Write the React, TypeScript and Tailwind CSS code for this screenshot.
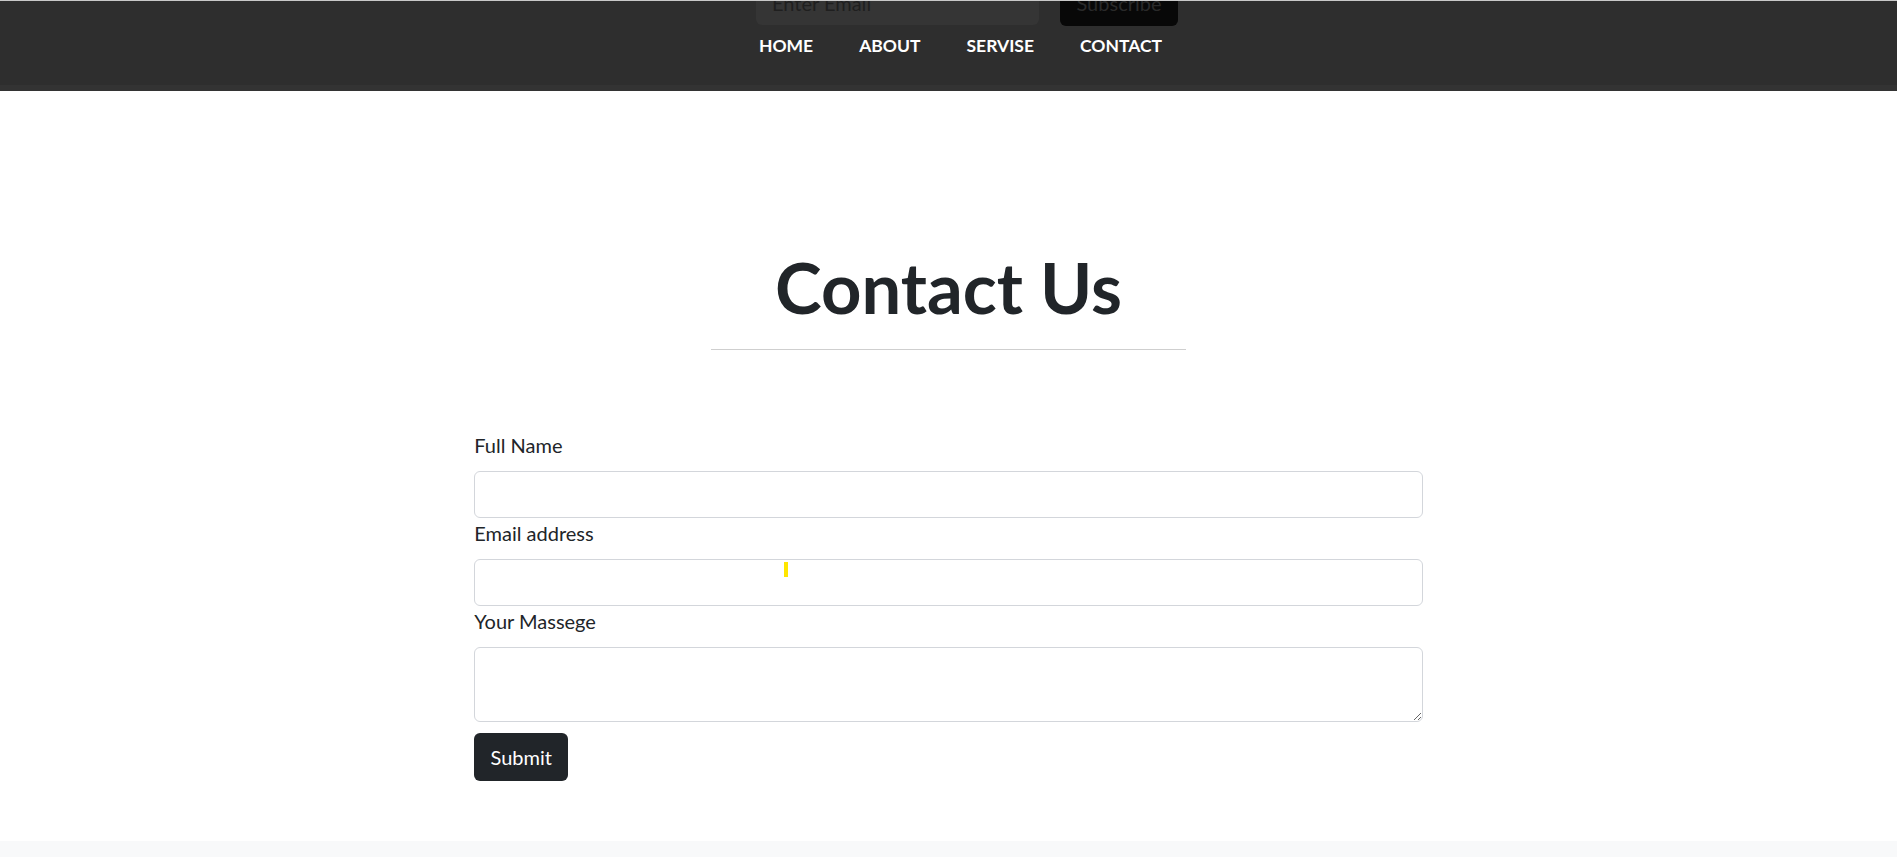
import React from "react";

export default function App() {
  const font = { fontFamily: "Lato, 'Noto Sans', sans-serif" };
  return (
    <div className="min-h-[857px] bg-white flex flex-col" style={font}>
      <div className="h-px bg-[#c9c9c9]" />
      <header className="h-[84px] bg-[#2e2e2e] overflow-hidden flex flex-col items-center">
        <div className="flex items-start gap-[21px] -mt-[21px] pl-[37px]">
          <div className="w-[283px] h-[45px] rounded-[6px] bg-[#353535] flex items-center px-[16px] text-[20px] text-[#1f1f1f]">
            Enter Email
          </div>
          <div className="w-[118px] h-[46px] rounded-[6px] bg-[#080808] flex items-center justify-center text-[20px] text-[#2a2a2a]">
            Subscribe
          </div>
        </div>
        <nav className="mt-[6px] flex gap-[46px] pl-[24px] text-[17.5px] leading-[27px] font-bold text-white uppercase">
          <a>HOME</a>
          <a>ABOUT</a>
          <a>SERVISE</a>
          <a>CONTACT</a>
        </nav>
      </header>
      <div className="h-[6px] bg-[#333333]" />
      <main className="flex-1 flex flex-col items-center pt-[153px] pb-[59px]">
        <h1 className="text-[70.5px] leading-[85px] font-bold text-[#212529]">Contact Us</h1>
        <hr className="w-1/4 mt-[20px] border-0 h-px bg-[#cfcfcf]" />
        <form className="w-1/2 mt-[80px] flex flex-col text-[#212529] text-[20px] leading-[30px]">
          <label className="mb-[11px]">Full Name</label>
          <input className="h-[47px] border border-[#d3d6db] rounded-[6px] outline-none px-3" />
          <label className="mb-[11px]">Email address</label>
          <div className="relative">
            <input className="w-full h-[47px] border border-[#d3d6db] rounded-[6px] outline-none px-3" />
            <div className="absolute left-[310px] top-[3px] w-[4px] h-[15px] bg-[#ffe600]" />
          </div>
          <label className="mb-[11px]">Your Massege</label>
          <textarea className="h-[75px] border border-[#d3d6db] rounded-[6px] outline-none px-3 py-1.5" />
          <div className="mt-[11px]">
            <button type="button" className="w-[94px] h-[48px] rounded-[6px] bg-[#212529] text-white text-[20px]">
              Submit
            </button>
          </div>
        </form>
      </main>
      <footer className="h-[16px] bg-[#f8f9fa]" />
    </div>
  );
}
